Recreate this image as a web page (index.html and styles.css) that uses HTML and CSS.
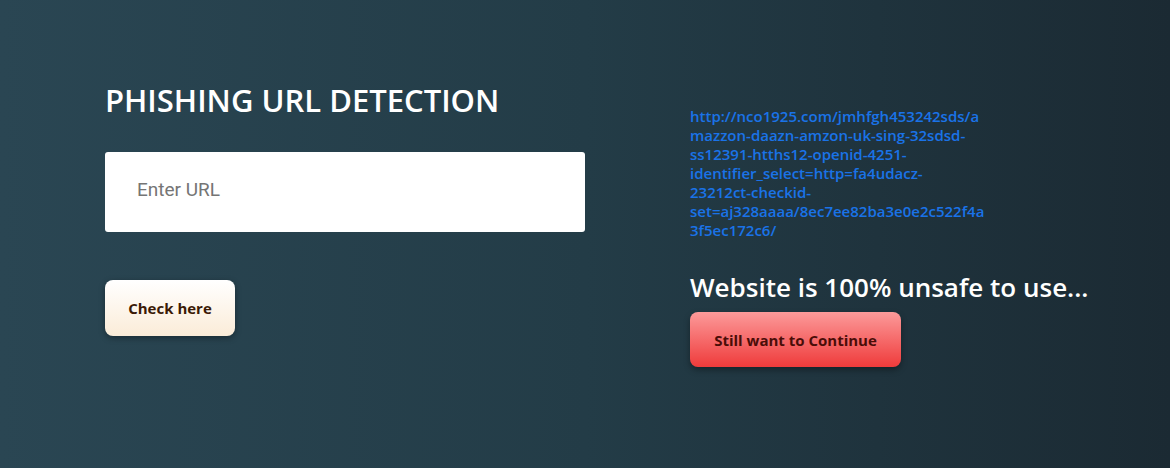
FILE: index.html
```html
<!DOCTYPE html>
<html lang="en">
<head>
<meta charset="utf-8">
<title>Phishing URL Detection</title>
<link rel="stylesheet" href="styles.css">
</head>
<body>
<main class="page">
  <section class="left">
    <h1 class="title">PHISHING URL DETECTION</h1>
    <form class="form">
      <input class="url-input" type="text" placeholder="Enter URL">
      <button class="check-btn" type="button">Check here</button>
    </form>
  </section>
  <section class="right">
    <a class="url" href="#">http://nco1925.com/jmhfgh453242sds/amazzon-daazn-amzon-uk-sing-32sdsd-ss12391-htths12-openid-4251-identifier_select=http=fa4udacz-<br>23212ct-checkid-set=aj328aaaa/8ec7ee82ba3e0e2c522f4a3f5ec172c6/</a>
    <h2 class="verdict">Website is 100% unsafe to use...</h2>
    <button class="continue-btn" type="button">Still want to Continue</button>
  </section>
</main>
</body>
</html>
```
FILE: styles.css
```css
html, body {
  margin: 0;
  padding: 0;
  height: 100%;
}
body {
  background: linear-gradient(90deg, #2a4653 0%, #233c47 50%, #1b2a33 100%);
  font-family: "Open Sans", "Noto Sans", sans-serif;
  color: #fff;
}
.page {
  display: flex;
  align-items: flex-start;
  padding-left: 105px;
  gap: 105px;
}
.left {
  width: 480px;
  padding-top: 80px;
}
.title {
  margin: 0;
  font-size: 31px;
  font-weight: 600;
  line-height: 40px;
  color: #fff;
}
.form {
  display: flex;
  flex-direction: column;
  align-items: flex-start;
  margin-top: 32px;
  gap: 48px;
}
.url-input {
  box-sizing: border-box;
  width: 480px;
  height: 80px;
  border: none;
  border-radius: 3px;
  background: #fff;
  padding: 0 32px 5px;
  font-family: Roboto, sans-serif;
  font-size: 19px;
  color: #333;
  outline: none;
}
.url-input::placeholder {
  color: #757575;
}
.check-btn {
  width: 130px;
  height: 56px;
  border: none;
  border-radius: 8px;
  background: linear-gradient(180deg, #ffffff 0%, #fbecd8 100%);
  box-shadow: 0 2px 6px rgba(0,0,0,0.35);
  font-family: "Open Sans", "Noto Sans", sans-serif;
  font-weight: 700;
  font-size: 15px;
  color: #3b1a06;
  cursor: pointer;
}
.right {
  width: 310px;
  padding-top: 107px;
  display: flex;
  flex-direction: column;
  align-items: flex-start;
}
.url {
  display: block;
  width: 300px;
  color: #1a73e8;
  font-weight: 600;
  font-size: 15px;
  line-height: 19px;
  text-decoration: none;
  overflow-wrap: anywhere;
}
.verdict {
  margin: 30px 0 0;
  font-size: 26px;
  font-weight: 600;
  line-height: 34px;
  white-space: nowrap;
  color: #fff;
}
.continue-btn {
  margin-top: 8px;
  width: 211px;
  height: 55px;
  border: none;
  border-radius: 8px;
  background: linear-gradient(180deg, #fc9a9a 0%, #ef3b3b 100%);
  box-shadow: 0 3px 6px rgba(0,0,0,0.35);
  font-family: "Open Sans", "Noto Sans", sans-serif;
  font-weight: 700;
  font-size: 15px;
  color: #4a0d08;
  cursor: pointer;
}
```
